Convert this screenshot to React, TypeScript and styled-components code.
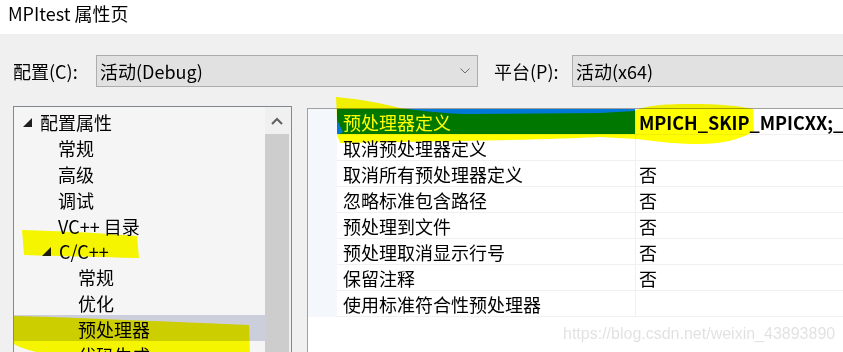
import React from 'react';
import styled, { createGlobalStyle } from 'styled-components';

const GlobalStyle = createGlobalStyle`
  *, *::before, *::after { box-sizing: border-box; }
  html, body { margin: 0; padding: 0; background: #f0f0f0; }
  body {
    font-family: "Noto Sans CJK SC", "Noto Sans", sans-serif;
    color: #000;
  }
`;

const Page = styled.div`
  position: relative;
  width: 843px;
  height: 352px;
  overflow: hidden;
  background: #f0f0f0;
  font-size: 18px;
`;

const TitleBar = styled.div`
  height: 34px;
  background: #fff;
  padding-left: 8px;
  line-height: 27px;
  white-space: nowrap;
`;

const ConfigRow = styled.div`
  display: flex;
  align-items: center;
  height: 53px;
  padding: 21px 0 0 13px;
  white-space: nowrap;
`;

const Label = styled.div<{ $width: number }>`
  flex: none;
  width: ${(p) => p.$width}px;
  line-height: 24px;
`;

const Combo = styled.div<{ $width: number }>`
  flex: none;
  width: ${(p) => p.$width}px;
  height: 32px;
  display: flex;
  align-items: center;
  justify-content: space-between;
  padding: 0 7px 0 3px;
  background: #e1e1e1;
  border: 1px solid #adadad;
  line-height: 24px;
`;

const Body = styled.div`
  display: flex;
  align-items: flex-start;
  gap: 15px;
  padding-left: 13px;
  margin-top: 19px;
`;

const TreePanel = styled.div`
  flex: none;
  display: flex;
  width: 279px;
  height: 262px;
  background: #f5f5f5;
  border: 1px solid #828790;
`;

const TreeList = styled.div`
  width: 251px;
  padding-top: 2px;
  display: flex;
  flex-direction: column;
`;

const TreeRow = styled.div<{ $indent: number; $selected?: boolean }>`
  height: 26px;
  display: flex;
  align-items: center;
  padding-left: ${(p) => p.$indent}px;
  padding-top: 1px;
  line-height: 24px;
  white-space: nowrap;
  background: ${(p) => (p.$selected ? '#cccedb' : 'transparent')};
`;

const Expander = styled.span`
  flex: none;
  width: 17px;
  display: flex;
  align-items: center;
`;

const ScrollBar = styled.div`
  width: 26px;
  display: flex;
  flex-direction: column;
  background: #f0f0f0;
`;

const ScrollArrow = styled.div`
  height: 27px;
  display: flex;
  align-items: center;
  justify-content: center;
  padding-right: 2px;
`;

const ScrollThumb = styled.div`
  flex: 1;
  margin-right: 2px;
  background: #cdcdcd;
`;

const GridPanel = styled.div`
  flex: none;
  width: 560px;
  height: 262px;
  margin-top: 2px;
  background: #fff;
  border: 1px solid #a0a0a0;
`;

const GridRow = styled.div`
  display: flex;
  height: 26px;
`;

const MarginCell = styled.div`
  flex: none;
  width: 29px;
  background: #f4f7fc;
`;

const NameCell = styled.div<{ $selected?: boolean }>`
  flex: none;
  width: 299px;
  padding: 1px 0 0 6px;
  line-height: 24px;
  white-space: nowrap;
  border-right: 1px solid #f0f0f0;
  border-bottom: 1px solid #f0f0f0;
  background: ${(p) => (p.$selected ? '#0078d7' : '#fff')};
  color: ${(p) => (p.$selected ? '#fff' : '#000')};
`;

const ValueCell = styled.div<{ $bold?: boolean }>`
  flex: 1;
  padding: 1px 0 0 3px;
  line-height: 24px;
  white-space: nowrap;
  overflow: hidden;
  border-bottom: 1px solid #f0f0f0;
  font-weight: ${(p) => (p.$bold ? 700 : 400)};
`;

const Watermark = styled.div`
  position: absolute;
  left: 563px;
  top: 324px;
  font-family: "Liberation Sans", Arial, sans-serif;
  font-size: 16px;
  line-height: 19px;
  color: rgba(0, 0, 0, 0.12);
  white-space: nowrap;
`;

const Highlighter = styled.svg`
  position: absolute;
  left: 0;
  top: 0;
  pointer-events: none;
  mix-blend-mode: multiply;
`;

const Triangle = () => (
  <svg width="9" height="9" viewBox="0 0 9 9">
    <polygon points="9,0 9,9 0,9" fill="#1e1e1e" />
  </svg>
);

const Chevron = ({ up }: { up?: boolean }) =>
  up ? (
    <svg width="12" height="8" viewBox="0 0 12 8">
      <polyline points="1,7 6,2 11,7" fill="none" stroke="#606060" strokeWidth="2" />
    </svg>
  ) : (
    <svg width="10" height="6" viewBox="0 0 10 6">
      <polyline points="0.5,0.5 5,5 9.5,0.5" fill="none" stroke="#6d6d6d" strokeWidth="1" />
    </svg>
  );

const treeItems = [
  { text: '配置属性', indent: 9, expander: true },
  { text: '常规', indent: 44 },
  { text: '高级', indent: 44 },
  { text: '调试', indent: 44 },
  { text: 'VC++ 目录', indent: 44 },
  { text: 'C/C++', indent: 28, expander: true },
  { text: '常规', indent: 64 },
  { text: '优化', indent: 64 },
  { text: '预处理器', indent: 64, selected: true },
  { text: '代码生成', indent: 64 },
];

const props = [
  { name: '预处理器定义', value: 'MPICH_SKIP_MPICXX;_DEBUG;_CONSOLE;%(PreprocessorDefinitions)', bold: true, selected: true },
  { name: '取消预处理器定义', value: '' },
  { name: '取消所有预处理器定义', value: '否' },
  { name: '忽略标准包含路径', value: '否' },
  { name: '预处理到文件', value: '否' },
  { name: '预处理取消显示行号', value: '否' },
  { name: '保留注释', value: '否' },
  { name: '使用标准符合性预处理器', value: '' },
];

export default function App() {
  return (
    <Page>
      <GlobalStyle />
      <TitleBar>MPItest 属性页</TitleBar>

      <ConfigRow>
        <Label $width={83}>配置(C):</Label>
        <Combo $width={382}>
          <span>活动(Debug)</span>
          <Chevron />
        </Combo>
        <Label $width={78} style={{ marginLeft: 16 }}>平台(P):</Label>
        <Combo $width={300}>
          <span>活动(x64)</span>
        </Combo>
      </ConfigRow>

      <Body>
        <TreePanel>
          <TreeList>
            {treeItems.map((it, i) => (
              <TreeRow key={i} $indent={it.indent} $selected={it.selected}>
                {it.expander && (
                  <Expander>
                    <Triangle />
                  </Expander>
                )}
                {it.text}
              </TreeRow>
            ))}
          </TreeList>
          <ScrollBar>
            <ScrollArrow>
              <Chevron up />
            </ScrollArrow>
            <ScrollThumb />
          </ScrollBar>
        </TreePanel>

        <GridPanel>
          {props.map((p, i) => (
            <GridRow key={i}>
              <MarginCell />
              <NameCell $selected={p.selected}>{p.name}</NameCell>
              <ValueCell $bold={p.bold}>{p.value}</ValueCell>
            </GridRow>
          ))}
        </GridPanel>
      </Body>

      <Watermark>https://blog.csdn.net/weixin_43893890</Watermark>

      {/* yellow marker strokes drawn over the screenshot */}
      <Highlighter width="843" height="352" viewBox="0 0 843 352">
        <path
          d="M22,230 C60,231 100,233 137,236 L139,258 C100,257 60,256 24,255 Z"
          fill="#ffff00"
        />
        <path
          d="M14,316 C90,318 170,322 249,325 L250,353 L40,353 C28,350 18,347 14,344 Z"
          fill="#ffff00"
        />
        <path
          d="M336,97 C360,99 385,104 400,108 C430,112 455,114 470,114 L600,113 L634,111
             C645,106 660,104 690,104 C720,104 740,106 753,109 L754,131
             C740,140 720,144 700,144 C680,144 660,142 636,139 L600,137
             C560,139 480,141 400,142 L340,143 L337,135 L343,132 L337,120 Z"
          fill="#ffff00"
        />
      </Highlighter>
    </Page>
  );
}
